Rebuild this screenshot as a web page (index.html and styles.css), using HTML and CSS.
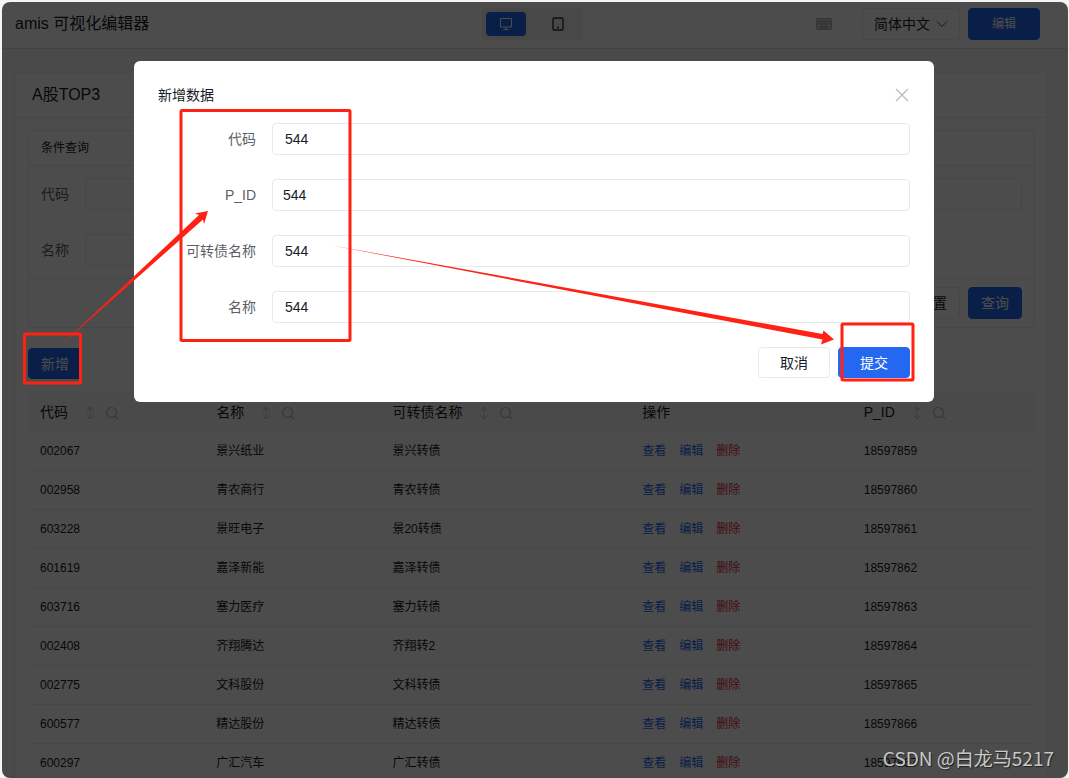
FILE: index.html
```html
<!DOCTYPE html>
<html lang="zh-CN">
<head>
    <meta charset="utf-8">
    <title>amis 可视化编辑器</title>
    <link rel="stylesheet" href="styles.css">
</head>
<body>
    <svg class="sprite" aria-hidden="true">
        <symbol id="sort" viewBox="0 0 10 14">
            <path d="M5 1v5M1.500 4.500L5 1l3.500 3.500M5 8v5M1.500 9.500L5 13l3.500-3.500" fill="none" stroke="currentColor"/>
        </symbol>
        <symbol id="search" viewBox="0 0 14 14">
            <circle cx="6.500" cy="6.500" r="5" fill="none" stroke="currentColor" stroke-width="1.200"/>
            <path d="M10 10l3 3" stroke="currentColor" stroke-width="1.200"/>
        </symbol>
    </svg>

    <div class="window">
        <header class="header">
            <div class="brand">amis 可视化编辑器</div>
            <div class="devices">
                <button class="device active" aria-label="PC">
                    <svg width="14" height="14" viewBox="0 0 14 14" fill="none" stroke="currentColor"><path d="M1.500 1.500h11v8.500h-11zM7 10v2.500M4.500 12.500h5"/></svg>
                </button>
                <button class="device" aria-label="Mobile">
                    <svg width="12" height="14" viewBox="0 0 12 14" fill="none" stroke="currentColor" stroke-width="1.400"><rect x="1" y="1" width="10" height="12" rx="1"/><path d="M5 10.500h2"/></svg>
                </button>
            </div>
            <div class="actions">
                <svg class="keyboard" width="16" height="12" viewBox="0 0 16 12"><rect x=".5" y=".5" width="15" height="11" rx="1" fill="#ccc" stroke="#aaa"/><path d="M2.500 3.500h11M2.500 6h11" stroke="#888" stroke-dasharray="1.500 1"/><path d="M4 9h8" stroke="#888"/></svg>
                <button class="btn lang">简体中文
                    <svg width="12" height="12" viewBox="0 0 12 12" fill="none" stroke="#555"><path d="M1 3.500l5 5 5-5"/></svg>
                </button>
                <button class="btn primary edit">编辑</button>
            </div>
        </header>

        <main class="page">
            <section class="card">
                <h1>A股TOP3</h1>
                <div class="card-body">
                    <form class="filter">
                        <h2>条件查询</h2>
                        <div class="filter-fields">
                            <div class="filter-field"><label for="q-code">代码</label><input id="q-code" type="text"></div>
                            <div class="filter-field"><label for="q-pid">P_ID</label><input id="q-pid" type="text"></div>
                            <div class="filter-field"><label for="q-name">名称</label><input id="q-name" type="text"></div>
                        </div>
                        <div class="filter-actions">
                            <button type="reset" class="btn">重置</button>
                            <button type="button" class="btn primary">查询</button>
                        </div>
                    </form>
                    <button class="btn primary add">新增</button>
                    <table>
                        <thead>
                            <tr>
                                <th class="col-code">代码<svg class="sort"><use href="#sort"/></svg><svg class="search"><use href="#search"/></svg></th>
                                <th class="col-name">名称<svg class="sort"><use href="#sort"/></svg><svg class="search"><use href="#search"/></svg></th>
                                <th class="col-bond">可转债名称<svg class="sort"><use href="#sort"/></svg><svg class="search"><use href="#search"/></svg></th>
                                <th class="col-ops">操作</th>
                                <th class="col-pid">P_ID<svg class="sort"><use href="#sort"/></svg><svg class="search"><use href="#search"/></svg></th>
                            </tr>
                        </thead>
                        <tbody>
                            <tr><td>002067</td><td>景兴纸业</td><td>景兴转债</td><td><a href="#">查看</a><a href="#">编辑</a><a href="#" class="danger">删除</a></td><td>18597859</td></tr>
                            <tr><td>002958</td><td>青农商行</td><td>青农转债</td><td><a href="#">查看</a><a href="#">编辑</a><a href="#" class="danger">删除</a></td><td>18597860</td></tr>
                            <tr><td>603228</td><td>景旺电子</td><td>景20转债</td><td><a href="#">查看</a><a href="#">编辑</a><a href="#" class="danger">删除</a></td><td>18597861</td></tr>
                            <tr><td>601619</td><td>嘉泽新能</td><td>嘉泽转债</td><td><a href="#">查看</a><a href="#">编辑</a><a href="#" class="danger">删除</a></td><td>18597862</td></tr>
                            <tr><td>603716</td><td>塞力医疗</td><td>塞力转债</td><td><a href="#">查看</a><a href="#">编辑</a><a href="#" class="danger">删除</a></td><td>18597863</td></tr>
                            <tr><td>002408</td><td>齐翔腾达</td><td>齐翔转2</td><td><a href="#">查看</a><a href="#">编辑</a><a href="#" class="danger">删除</a></td><td>18597864</td></tr>
                            <tr><td>002775</td><td>文科股份</td><td>文科转债</td><td><a href="#">查看</a><a href="#">编辑</a><a href="#" class="danger">删除</a></td><td>18597865</td></tr>
                            <tr><td>600577</td><td>精达股份</td><td>精达转债</td><td><a href="#">查看</a><a href="#">编辑</a><a href="#" class="danger">删除</a></td><td>18597866</td></tr>
                            <tr><td>600297</td><td>广汇汽车</td><td>广汇转债</td><td><a href="#">查看</a><a href="#">编辑</a><a href="#" class="danger">删除</a></td><td>18597867</td></tr>
                        </tbody>
                    </table>
                </div>
            </section>
        </main>

        <div class="overlay">
            <form class="modal" role="dialog" aria-labelledby="modal-title">
                <div class="modal-header">
                    <h2 id="modal-title">新增数据</h2>
                    <button type="button" class="close" aria-label="关闭">
                        <svg width="16" height="16" viewBox="0 0 16 16" stroke="#b8babf" stroke-width="1.300"><path d="M2 2l12 12M14 2L2 14"/></svg>
                    </button>
                </div>
                <div class="field"><label for="code">代码</label><input id="code" type="text" value="544"></div>
                <div class="field"><label for="pid">P_ID</label><input id="pid" class="number" type="text" inputmode="numeric" value="544"></div>
                <div class="field"><label for="bond">可转债名称</label><input id="bond" type="text" value="544"></div>
                <div class="field"><label for="name">名称</label><input id="name" type="text" value="544"></div>
                <div class="modal-footer">
                    <button type="button" class="btn">取消</button>
                    <button type="button" class="btn primary">提交</button>
                </div>
            </form>
        </div>
    </div>

    <!-- tutorial marks -->
    <svg class="marks" width="1069" height="778" viewBox="0 0 1069 778" aria-hidden="true">
        <g fill="none" stroke="#ff2114" stroke-width="3">
            <rect x="181" y="110.500" width="169" height="230" rx="1"/>
            <rect x="24.500" y="334" width="56" height="49" rx="1"/>
            <rect x="842" y="324" width="71" height="56" rx="1"/>
        </g>
        <g fill="#ff2114">
            <path d="M60 346L199 215L195 213.500L208 211L204 224L203 219.500Z"/>
            <path d="M330 245L822.500 334L823.500 330.500L834 339.500L821 344.500L822.500 339.500Z"/>
        </g>
    </svg>
    <div class="watermark">CSDN @白龙马5217</div>
</body>
</html>
```
FILE: styles.css
```css
* { box-sizing: border-box; }
body { margin: 0; height: 100vh; overflow: hidden; position: relative; background: #f5f5f5; color: #151b26; font: 14px/20px "Liberation Sans", "Noto Sans CJK SC", sans-serif; }
button, input { font: inherit; color: inherit; }
h1, h2 { margin: 0; font-weight: normal; }
.sprite { position: absolute; width: 0; height: 0; }

.window { position: relative; height: calc(100vh - 2px); margin: 2px 1px 0 2px; border-radius: 8px; overflow: hidden; background: #f7f8fa; }

.header { display: grid; grid-template-columns: 1fr auto 1fr; align-items: center; height: 47px; padding: 0 28px 2px 13px; background: #fff; border-bottom: 1px solid #e0e2e6; }
.brand { font-size: 16px; }
.devices { display: flex; padding: 4px; gap: 12px; margin-left: 8px; border-radius: 4px; background: #f0f1f3; }
.device { display: flex; align-items: center; justify-content: center; width: 40px; height: 24px; padding: 0; border: 0; border-radius: 4px; background: none; color: #333; }
.device.active { background: #2468f2; color: #fff; }
.actions { display: flex; justify-content: flex-end; align-items: center; gap: 8px; }
.keyboard { margin-right: 22px; }

.btn { height: 32px; padding: 0 12px; border: 1px solid #e8e9eb; border-radius: 4px; background: #fff; cursor: pointer; }
.btn.primary { border-color: #2468f2; background: #2468f2; color: #fff; }
.lang { display: flex; align-items: center; gap: 6px; padding: 0 11px; }
.edit { width: 72px; font-size: 12px; }

.page { padding: 24px 21px 0 14px; }
.card { background: #fff; box-shadow: 0 0 4px rgba(0, 0, 0, .08); }
.card h1 { padding: 11px 16px; font-size: 16px; line-height: 22px; border-bottom: 1px solid #e8e9eb; }
.card-body { padding: 12px; }

.filter { border: 1px solid #e8e9eb; border-radius: 4px; }
.filter h2 { padding: 7px 12px; font-size: 12px; border-bottom: 1px solid #e8e9eb; }
.filter-fields { display: grid; grid-template-columns: 1fr 1fr; gap: 24px 16px; padding: 12px; }
.filter-field { display: flex; align-items: center; gap: 16px; color: #5c5f66; }
input { flex: 1; min-width: 0; height: 32px; padding: 0 12px; border: 1px solid #e8e9eb; border-radius: 4px; background: #fff; color: #151b26; }
.filter-actions { display: flex; justify-content: flex-end; gap: 8px; padding: 8px 12px; border-top: 1px solid #e8e9eb; }
.add { display: block; height: 31px; margin: 20px 0 12px; }

table { width: 100%; table-layout: fixed; border-collapse: separate; border-spacing: 0; font-size: 12px; }
th { height: 41px; padding: 0 12px; background: #f7f8fa; font-size: 14px; font-weight: normal; text-align: left; }
td { height: 39px; padding: 0 12px; border-bottom: 1px solid #e8e9eb; }
.col-code, .col-name { width: 17.5%; }
.col-bond { width: 24.8%; }
.col-ops { width: 22%; }
.col-pid { width: 18.2%; }
.sort, .search { height: 14px; color: #bbb; vertical-align: middle; }
.sort { width: 10px; margin-left: 17px; }
.search { width: 14px; margin-left: 10px; }
a { margin-right: 13px; color: #2468f2; text-decoration: none; }
.danger { color: #e82837; }

.overlay { position: absolute; inset: 0; display: flex; justify-content: center; align-items: flex-start; padding: 59px 26px 0 24px; background: rgba(0, 0, 0, .7); }
.modal { width: 800px; padding: 24px; border-radius: 6px; background: #fff; }
.modal-header { display: flex; justify-content: space-between; align-items: center; margin-bottom: 18px; }
.modal-header h2 { font-size: 14px; }
.close { display: flex; padding: 0; border: 0; background: none; cursor: pointer; }
.field { display: flex; align-items: center; gap: 16px; margin-bottom: 24px; }
.field label { width: 98px; text-align: right; color: #5c5f66; }
.field .number { padding: 0 10px; }
.modal-footer { display: flex; justify-content: flex-end; gap: 8px; }
.modal-footer .btn { width: 72px; height: 31px; }

.marks { position: absolute; left: 0; top: 0; pointer-events: none; }
.watermark { position: absolute; right: 15px; bottom: 8px; font: 19px/24px "Noto Sans CJK SC", sans-serif; color: #c8c8c8; text-shadow: 1px 1px 1px #222; }
```
